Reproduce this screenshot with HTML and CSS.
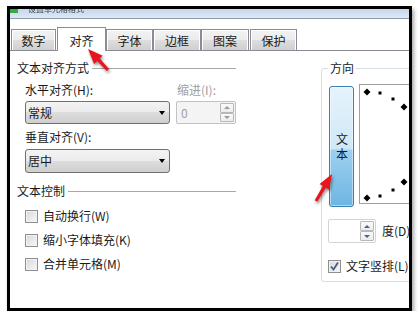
FILE: index.html
```html
<!DOCTYPE html>
<html lang="zh-CN">
<head>
    <meta charset="UTF-8">
    <title>设置单元格格式</title>
    <link rel="stylesheet" href="styles.css">
</head>
<body>

<div class="window">
    <div class="titlebar">
        <span class="app-icon"></span>
        <span class="title">设置单元格格式</span>
    </div>

    <div class="tabs">
        <div class="tab">数字</div>
        <div class="tab active">对齐</div>
        <div class="tab">字体</div>
        <div class="tab">边框</div>
        <div class="tab">图案</div>
        <div class="tab">保护</div>
    </div>

    <div class="panel">
        <div class="align-col">
            <div class="group-title">文本对齐方式</div>
            <div class="field-labels">
                <span class="h-label">水平对齐(H):</span>
                <span class="disabled">缩进(I):</span>
            </div>
            <div class="field-row">
                <div class="combo">常规</div>
                <div class="spin indent">
                    <span class="spin-value">0</span>
                    <span class="spin-btns"><span class="spin-btn up"></span><span class="spin-btn down"></span></span>
                </div>
            </div>
            <div class="field-label">垂直对齐(V):</div>
            <div class="combo v-combo">居中</div>

            <div class="group-title second">文本控制</div>
            <div class="checks">
                <div class="check"><span class="box"></span>自动换行(W)</div>
                <div class="check"><span class="box"></span>缩小字体填充(K)</div>
                <div class="check"><span class="box"></span>合并单元格(M)</div>
            </div>
        </div>

        <div class="orient">
            <div class="legend">方向</div>
            <div class="orient-body">
                <div class="vbtn"><span class="vtext">文本</span></div>
                <div class="dial">
                    <svg width="80" height="118" viewBox="0 0 80 118">
                        <polygon points="7,3.5 10.5,7 7,10.5 3.5,7" fill="#000"/>
                        <rect x="18.5" y="6.5" width="3" height="3" fill="#000"/>
                        <rect x="31.5" y="12.5" width="3" height="3" fill="#000"/>
                        <polygon points="44,18.5 47.5,22 44,25.5 40.5,22" fill="#000"/>
                        <polygon points="44,93.5 47.5,97 44,100.5 40.5,97" fill="#000"/>
                        <rect x="31.5" y="103.5" width="3" height="3" fill="#000"/>
                        <rect x="18.5" y="109.5" width="3" height="3" fill="#000"/>
                        <polygon points="7,109.5 10.5,113 7,116.5 3.5,113" fill="#000"/>
                    </svg>
                </div>
            </div>
            <div class="deg-row">
                <div class="spin deg">
                    <span class="spin-value"></span>
                    <span class="spin-btns"><span class="spin-btn up"></span><span class="spin-btn down"></span></span>
                </div>
                <span class="deg-label">度(D)</span>
            </div>
            <div class="check vertical-check">
                <span class="box checked">
                    <svg width="11" height="11" viewBox="0 0 11 11"><path d="M2 5.5 L4.5 8.5 L9 1.5" fill="none" stroke="#4a5a86" stroke-width="1.8"/></svg>
                </span>文字竖排(L)
            </div>
        </div>
    </div>
</div>

<svg class="marks" width="418" height="318" viewBox="0 0 418 318">
    <polygon points="88,49 102.7,55.7 99.7,58.6 109.1,69 106.9,71 97.1,61 94.1,63.9" fill="#e8161c"/>
    <polygon points="332,174 329.1,189.7 325.9,187.8 317.3,201.8 314.7,200.2 322.8,186 319.6,184.1" fill="#e8161c"/>
</svg>

</body>
</html>
```

FILE: styles.css
```css
body {
    margin: 0;
    background: #fff;
    font-family: "Noto Sans CJK SC", "Liberation Sans", sans-serif;
    font-size: 12px;
    color: #1a1a1a;
}
.window {
    margin: 6px 0 0 7px;
    width: 399px;
    height: 299px;
    border: 3px solid #000;
    background: #fff;
    overflow: hidden;
    box-shadow: 2px 3px 4px rgba(0, 0, 0, 0.35);
}
.titlebar {
    height: 9px;
    display: flex;
    overflow: hidden;
    border-bottom: 1px solid #8e9bab;
    background: linear-gradient(#c6d8ec, #dce8f5);
}
.app-icon {
    width: 8px;
    height: 4px;
    background: #36a94b;
}
.title {
    margin: -6px 0 0 10px;
    font-size: 8px;
    line-height: 12px;
    color: #3a4350;
    filter: blur(0.5px);
}

/* tabs */
.tabs {
    height: 31px;
    display: flex;
    align-items: flex-end;
    padding-left: 1px;
    border-bottom: 1px solid #898c95;
}
.tab {
    width: 47px;
    height: 21px;
    box-sizing: border-box;
    padding-top: 4px;
    border: 1px solid #898c95;
    border-bottom: none;
    line-height: 14px;
    text-align: center;
    background: linear-gradient(#f3f3f3, #ebebeb 50%, #dedede 50%, #cfcfcf);
    box-shadow: inset 1px 1px 0 #fff, inset -1px 0 0 #fff;
}
.tab:nth-child(1) {
    width: 45px;
    margin-right: 1px;
}
.tab:nth-child(4),
.tab:nth-child(5) {
    width: 48px;
}
.tab:nth-child(5) {
    margin-right: 1px;
}
.tab.active {
    width: 49px;
    height: 24px;
    padding-top: 6px;
    margin-bottom: -1px;
    background: #fff;
    box-shadow: none;
}

/* panel */
.panel {
    display: flex;
    padding: 10px 0 0 7px;
}
.align-col {
    width: 219px;
    flex: none;
}
.group-title {
    display: flex;
    align-items: center;
    line-height: 14px;
}
.group-title::after {
    content: "";
    flex: 1;
    margin-left: 3px;
    border-top: 1px solid #a8a8a8;
}
.group-title.second {
    margin-top: 11px;
}
.field-labels {
    display: flex;
    margin-top: 8px;
    padding-left: 8px;
    line-height: 14px;
}
.h-label {
    width: 152px;
}
.disabled {
    color: #a0a0a0;
}
.field-row {
    display: flex;
    margin-top: 4px;
    padding-left: 8px;
}
.field-label {
    margin-top: 6px;
    padding-left: 8px;
    line-height: 14px;
}
.combo {
    width: 145px;
    height: 23px;
    box-sizing: border-box;
    display: flex;
    align-items: center;
    padding: 0 4px 0 2px;
    border: 1px solid #707070;
    border-radius: 3px;
    line-height: 14px;
    background: linear-gradient(#f3f3f3, #ebebeb 50%, #dddddd 50%, #cfcfcf);
}
.combo::after {
    content: "";
    margin-left: auto;
    border-left: 3.5px solid transparent;
    border-right: 3.5px solid transparent;
    border-top: 4px solid #000;
}
.v-combo {
    margin: 5px 0 0 8px;
    height: 24px;
}

.spin {
    height: 23px;
    box-sizing: border-box;
    display: flex;
    border: 1px solid #c2c2c2;
    border-radius: 2px;
    background: #fff;
}
.spin.indent {
    width: 60px;
    margin-left: 6px;
    background: #f4f4f4;
}
.spin-value {
    flex: 1;
    padding-left: 4px;
    line-height: 21px;
    color: #a0a0a0;
}
.spin-btns {
    width: 14px;
    margin: 1px;
    display: flex;
    flex-direction: column;
}
.spin-btn {
    flex: 1;
    display: flex;
    align-items: center;
    justify-content: center;
    border: 1px solid #b8b8b8;
    border-radius: 1px;
    background: linear-gradient(#fafafa, #ececec);
}
.spin-btn::after {
    content: "";
    border-left: 3px solid transparent;
    border-right: 3px solid transparent;
}
.spin-btn.up::after {
    border-bottom: 3px solid #9a9a9a;
}
.spin-btn.down::after {
    border-top: 3px solid #9a9a9a;
}
.spin.deg .spin-btn.up::after {
    border-bottom-color: #4d6185;
}
.spin.deg .spin-btn.down::after {
    border-top-color: #4d6185;
}

.checks {
    margin-top: 6px;
}
.check {
    display: flex;
    align-items: center;
    height: 24px;
    padding-left: 8px;
    line-height: 14px;
}
.box {
    width: 13px;
    height: 13px;
    box-sizing: border-box;
    flex: none;
    margin-right: 5px;
    display: flex;
    align-items: center;
    justify-content: center;
    border: 1px solid #8f8f8f;
    background: linear-gradient(135deg, #d6d8dc, #f7f7f7);
    box-shadow: inset 0 0 0 1px #f2f2f2;
}

/* orientation group */
.orient {
    width: 130px;
    height: 214px;
    box-sizing: border-box;
    flex: none;
    margin: 7px 0 0 85px;
    padding-left: 6px;
    border: 1px solid #d5dfe5;
    border-radius: 3px;
}
.legend {
    display: table;
    margin-top: -8px;
    padding: 0 2px;
    line-height: 14px;
    background: #fff;
}
.orient-body {
    display: flex;
    align-items: flex-start;
    margin-top: 11px;
    padding-left: 1px;
}
.vbtn {
    width: 25px;
    height: 121px;
    box-sizing: border-box;
    display: flex;
    align-items: center;
    justify-content: center;
    border: 1px solid #3c7fb1;
    border-radius: 3px;
    background: linear-gradient(#e6f3fb, #cfe8f7 52%, #9ed0ef 53%, #6db6e2);
    box-shadow: inset 0 0 0 1px rgba(255, 255, 255, 0.45);
}
.vtext {
    writing-mode: vertical-rl;
    letter-spacing: 3px;
    line-height: 14px;
    margin-bottom: -3px;
}
.dial {
    width: 80px;
    height: 120px;
    box-sizing: border-box;
    margin: -2px 0 0 5px;
    border: 1px solid #a0a0a0;
}
.dial svg {
    display: block;
}
.deg-row {
    display: flex;
    align-items: center;
    margin-top: 12px;
}
.spin.deg {
    width: 48px;
    height: 24px;
    border-color: #d3d3d3;
}
.deg-label {
    margin-left: 6px;
    line-height: 14px;
    white-space: nowrap;
}
.vertical-check {
    height: 14px;
    margin-top: 16px;
    padding-left: 0;
    white-space: nowrap;
}

.marks {
    position: absolute;
    left: 0;
    top: 0;
    pointer-events: none;
    filter: drop-shadow(1px 2px 1.5px rgba(0, 0, 0, 0.45));
}
```
